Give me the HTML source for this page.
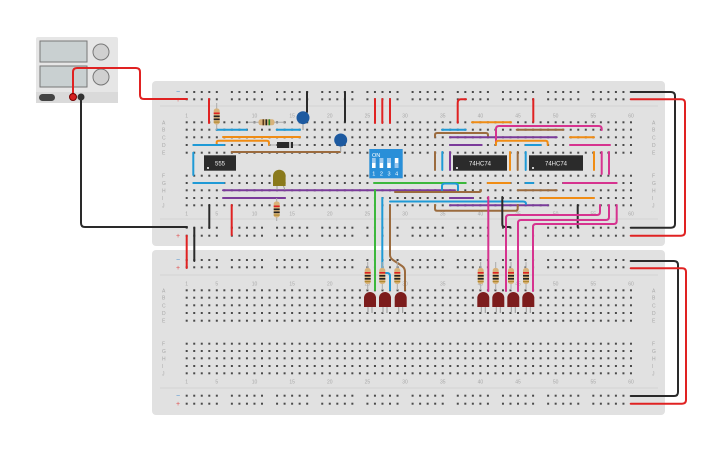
<!DOCTYPE html>
<html><head><meta charset="utf-8"><style>
html,body{margin:0;padding:0;background:#fff;width:725px;height:453px;overflow:hidden}
svg{display:block}
text{font-family:"Liberation Sans",sans-serif}
</style></head><body>
<svg id="s" width="725" height="453" viewBox="0 0 725 453" xmlns="http://www.w3.org/2000/svg">
<rect x="152" y="81" width="513" height="165" rx="4" fill="#e1e1e1"/>
<rect x="152" y="250" width="513" height="165" rx="4" fill="#e1e1e1"/>
<line x1="160" y1="106" x2="658" y2="106" stroke="#d4d4d4" stroke-width="1"/>
<line x1="160" y1="219" x2="658" y2="219" stroke="#d4d4d4" stroke-width="1"/>
<line x1="160" y1="275" x2="658" y2="275" stroke="#d4d4d4" stroke-width="1"/>
<line x1="160" y1="388" x2="658" y2="388" stroke="#d4d4d4" stroke-width="1"/>
<g id="dots" fill="#4a4a4a"></g>
<g id="lbl" fill="#a8a8a8" font-size="5"></g>
<rect x="36" y="37" width="82" height="66" rx="2" fill="#e6e6e6"/>
<rect x="40" y="41" width="47" height="21" fill="#c9d0d1" stroke="#777" stroke-width="1"/>
<rect x="40" y="66" width="47" height="21" fill="#c9d0d1" stroke="#777" stroke-width="1"/>
<circle cx="101" cy="52" r="8" fill="#d0d0d0" stroke="#777"/>
<circle cx="101" cy="77" r="8" fill="#d0d0d0" stroke="#777"/>
<rect x="36" y="92" width="82" height="11" fill="#dadada"/>
<rect x="39" y="94" width="16" height="7" rx="3.5" fill="#444"/>
<g fill="none" stroke-linecap="round" stroke-linejoin="round" stroke-width="2">
<path d="M73 97 V72 Q73 68 77 68 H136 Q140 68 140 72 V95 Q140 99 144 99 H187" stroke="#e02222"/>
<path d="M81 97 V223 Q81 227 85 227 H187" stroke="#2a2a2a"/>
</g>
<circle cx="73" cy="97" r="3.5" fill="#d42020" stroke="#700"/>
<circle cx="81" cy="97" r="3.5" fill="#333"/>
<g id="w" fill="none" stroke-linecap="round" stroke-linejoin="round" stroke-width="2"></g>
<g id="comp"></g>
</svg>
<script>
function X(c){return 186.7+(c-1)*7.53;}
var d=document.getElementById('dots'),h='';
function rows(ys,skip){ys.forEach(function(y){for(var c=1;c<=60;c++){if(skip&&c%6==0)continue;h+='<rect x="'+(X(c)-1)+'" y="'+(y-1)+'" width="2" height="2"/>';}});}
[0,168].forEach(function(o){
 rows([92+o,99.3+o,227.7+o,235.7+o],true);
 rows([122.3+o,129.7+o,137.3+o,145+o,152.7+o,175.7+o,183+o,190.3+o,198+o,205.3+o],false);
});
d.innerHTML=h;
var l='';
[0,168].forEach(function(o){
 [1,5,10,15,20,25,30,35,40,45,50,55,60].forEach(function(n){l+='<text x="'+X(n)+'" y="'+(117.5+o)+'" text-anchor="middle">'+n+'</text><text x="'+X(n)+'" y="'+(215.5+o)+'" text-anchor="middle">'+n+'</text>';});
 var L="ABCDE",L2="FGHIJ",ya=[122.3,129.7,137.3,145,152.7],yb=[175.7,183,190.3,198,205.3];
 for(var i=0;i<5;i++){l+='<text x="162" y="'+(ya[i]+o+2)+'">'+L[i]+'</text><text x="652" y="'+(ya[i]+o+2)+'">'+L[i]+'</text><text x="162" y="'+(yb[i]+o+2)+'">'+L2[i]+'</text><text x="652" y="'+(yb[i]+o+2)+'">'+L2[i]+'</text>';}
 l+='<text x="176" y="'+(94+o)+'" fill="#4a8fd0" font-size="7">−</text><text x="176" y="'+(102+o)+'" fill="#e05050" font-size="7">+</text>';
 l+='<text x="176" y="'+(230+o)+'" fill="#4a8fd0" font-size="7">−</text><text x="176" y="'+(238+o)+'" fill="#e05050" font-size="7">+</text>';
});
document.getElementById('lbl').innerHTML=l;
var R='#e02222',K='#2a2a2a',B='#1f9ad6',O='#f08c14',BR='#9b6b3e',P='#7a3b9a',G='#3cb83c',PK='#d6338f';
var W=[
[R,'M209 99 V123'],[K,'M307 92 V112'],[K,'M345 92 V122'],
[R,'M375 99 V123'],[R,'M382.3 99 V123'],[R,'M390 99 V123'],
[B,'M216.7 129.7 H246.7'],[B,'M276.7 129.7 H300'],
[O,'M223 137 H300'],[O,'M216.7 145 V142 Q216.7 140.7 219 140.7 H267 Q269 140.7 269 143 V145'],
[B,'M193.3 145 H224'],[BR,'M231.7 152 H340'],
[B,'M193.3 152.7 V175'],[B,'M193.3 183 H224'],
[P,'M223 190.3 H455'],[P,'M223 198 H285'],
[K,'M209.3 205 V228'],[R,'M231.7 205 V235'],
[R,'M186.7 235.7 V268'],[K,'M194.3 227.7 V261'],
[R,'M457.7 122.7 V103 Q457.7 99.3 461 99.3 H466'],[R,'M533.3 99 V122'],
[K,'M630.7 92 H671 Q675 92 675 96 V224 Q675 227.7 671 227.7 H630.7'],
[R,'M630.7 99.3 H681 Q685 99.3 685 103 V232 Q685 235.7 681 235.7 H630.7'],
[K,'M630.7 261 H674 Q678 261 678 265 V392 Q678 396 674 396 H630.7'],
[R,'M630.7 268.3 H682 Q686 268.3 686 272 V400 Q686 403.7 682 403.7 H630.7'],
[O,'M472 122.3 H511'],[B,'M442 129.7 H465.7'],
[BR,'M435 137 V135 Q435 133 437 133 H486 Q488 133 488 135 V137'],
[P,'M450 137.3 H556.7'],
[PK,'M496 143 V129 Q496 126 499 126 H599 Q601.7 126 601.7 129 V130'],
[BR,'M516.7 129.7 H563.3'],[O,'M570 137.3 H594'],[P,'M450 145 H481.7'],
[O,'M496 145 V143 Q496 140.7 498 140.7 H545.7 Q547.7 140.7 547.7 143 V145'],
[B,'M525.7 145 H540.7'],[PK,'M570 145 H610'],
[BR,'M435 152 V170'],[B,'M442.3 152 V170'],[P,'M450 152 V170'],[O,'M510 152 V170'],
[BR,'M517.7 152 V170'],[B,'M525.7 152 V170'],[O,'M594 152 V170'],[PK,'M601.7 152 V174'],[PK,'M609 152 V174'],
[G,'M374 183 H465.7'],[O,'M487.7 183 H510'],[B,'M525.7 183 H533.3'],[PK,'M563.3 183 H616.7'],
[B,'M442 190 V186 Q442 183.5 445 183.5 H455 Q458 183.5 458 186 V190'],
[BR,'M395 192 H479 Q481 192 481 190'],[BR,'M517.7 190.3 H556.7'],
[P,'M450 198 H473'],[O,'M540.7 198 H594'],[P,'M450 205.3 H548'],
[B,'M390 201.5 H523 Q526 201.5 526 204'],
[BR,'M435 205 V208.7 Q435 210.7 437 210.7 H515.7 Q517.7 210.7 517.7 208.7 V205'],
[K,'M502.3 197 V224 Q502.3 227 505 227 H510'],[K,'M577.7 205 V227'],
[G,'M375 190 V290'],[B,'M382.3 198 V270 Q382.3 273 385 273 H387 Q390 273 390 276 V290'],
[BR,'M390 206 V255 Q390 258 393 260 L402 266 Q405 268 405 272 V290'],
[PK,'M488.3 197 V291'],
[PK,'M600 205 V212 Q600 215 597 215 H509 Q506 215 506 218 V291'],
[PK,'M609 205 V217 Q609 220 606 220 H521 Q518 220 518 223 V291'],
[PK,'M616.7 205 V221 Q616.7 224 613.7 224 H536 Q533 224 533 227 V291']
];
var ws='';
W.forEach(function(w){ws+='<path d="'+w[1]+'" stroke="'+w[0]+'"/>';});
document.getElementById('w').innerHTML=ws;
var c='';
function resV(x,y1,y2){var m=(y1+y2)/2;c+='<line x1="'+x+'" y1="'+y1+'" x2="'+x+'" y2="'+y2+'" stroke="#aaa" stroke-width="1"/><rect x="'+(x-3)+'" y="'+(m-8)+'" width="6" height="16" rx="2.5" fill="#d8b27a"/><rect x="'+(x-3)+'" y="'+(m-4)+'" width="6" height="1.6" fill="#d22"/><rect x="'+(x-3)+'" y="'+(m-1)+'" width="6" height="1.6" fill="#222"/><rect x="'+(x-3)+'" y="'+(m+2)+'" width="6" height="1.6" fill="#222"/><rect x="'+(x-3)+'" y="'+(m+5)+'" width="6" height="1.2" fill="#b08a30"/>';}
function resH(x1,x2,y){var m=(x1+x2)/2;c+='<line x1="'+x1+'" y1="'+y+'" x2="'+x2+'" y2="'+y+'" stroke="#aaa"/><rect x="'+(m-8)+'" y="'+(y-3)+'" width="16" height="6" rx="2.5" fill="#d8b27a"/><rect x="'+(m-4)+'" y="'+(y-3)+'" width="1.6" height="6" fill="#5a3a1a"/><rect x="'+(m-1)+'" y="'+(y-3)+'" width="1.6" height="6" fill="#222"/><rect x="'+(m+2)+'" y="'+(y-3)+'" width="1.6" height="6" fill="#2a8a2a"/>';}
resV(216.7,103,130);resH(248,285,122.3);resV(276.7,198,221);
resV(367.7,262,290);resV(382.3,262,290);resV(397.3,262,290);
[480.7,495.7,511,526].forEach(function(x){resV(x,262,290);});
c+='<line x1="269" y1="145" x2="300" y2="145" stroke="#aaa"/><rect x="277" y="142" width="16" height="6" fill="#2a2a2a"/><rect x="289" y="142" width="2" height="6" fill="#bbb"/>';
c+='<line x1="303" y1="118" x2="303" y2="130" stroke="#999"/><circle cx="303" cy="117.7" r="6.5" fill="#1d5aa0"/>';
c+='<line x1="340.7" y1="140" x2="340.7" y2="152" stroke="#999"/><circle cx="340.7" cy="140" r="6.5" fill="#1d5aa0"/>';
c+='<rect x="204" y="155.3" width="32" height="15.4" fill="#2b2b2b"/><text x="220" y="165.5" fill="#eee" font-size="6" text-anchor="middle">555</text><circle cx="208" cy="168" r="1" fill="#fff"/>';
[453,529].forEach(function(x){c+='<rect x="'+x+'" y="155.3" width="54" height="15.4" fill="#2b2b2b"/><text x="'+(x+27)+'" y="165.5" fill="#eee" font-size="6" text-anchor="middle">74HC74</text><circle cx="'+(x+4)+'" cy="168" r="1" fill="#fff"/>';});
c+='<rect x="369.3" y="149" width="33.4" height="29.3" fill="#2a8fd8"/><text x="372" y="157" fill="#fff" font-size="5.5">ON</text>';
for(var i=0;i<4;i++){var sx=372+i*7.6;c+='<rect x="'+sx+'" y="158" width="3.6" height="10" fill="#fff"/><rect x="'+sx+'" y="'+(i==3?163:158)+'" width="3.6" height="5" fill="#9cc8ee"/><text x="'+(sx+1.8)+'" y="175.5" fill="#fff" font-size="5.5" text-anchor="middle">'+(i+1)+'</text>';}
c+='<line x1="277" y1="182" x2="277" y2="190" stroke="#999"/><line x1="282" y1="182" x2="285" y2="190" stroke="#999"/><path d="M273 186 V176 A6.3 6.3 0 0 1 285.6 176 V186 Z" fill="#8a7a1c"/>';
function led(x){c+='<line x1="'+(x-2)+'" y1="306" x2="'+(x-2)+'" y2="313" stroke="#999"/><line x1="'+(x+2)+'" y1="306" x2="'+(x+2)+'" y2="313" stroke="#999"/><path d="M'+(x-6)+' 307 V298 A6 6 0 0 1 '+(x+6)+' 298 V307 Z" fill="#7c1c1c"/>';}
[370,385,400.7,483.3,498.3,513.3,528.3].forEach(led);
document.getElementById('comp').innerHTML=c;
</script>
</body></html>
